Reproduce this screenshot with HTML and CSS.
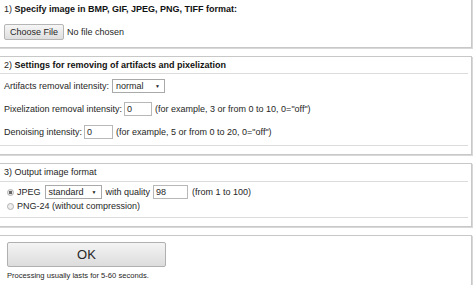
FILE: index.html
```html
<!DOCTYPE html>
<html>
<head>
<meta charset="utf-8">
<link rel="stylesheet" href="styles.css">
</head>
<body>
<div class="page">
  <section class="box box-file">
    <div class="head"><span class="num">1)</span> <b>Specify image in BMP, GIF, JPEG, PNG, TIFF format:</b></div>
    <div class="file-row">
      <button class="btn-file" type="button">Choose File</button>
      <span class="file-name">No file chosen</span>
    </div>
  </section>

  <section class="box box-set">
    <div class="head sep"><span class="num">2)</span> <b>Settings for removing of artifacts and pixelization</b></div>
    <div class="rows sep">
      <div class="row"><span>Artifacts removal intensity:</span><span class="select sel-normal"><span>normal</span><span class="arrow">▼</span></span></div>
      <div class="row"><span>Pixelization removal intensity:</span><span class="field f-pix">0</span><span class="hint">(for example, 3 or from 0 to 10, 0="off")</span></div>
      <div class="row"><span>Denoising intensity:</span><span class="field f-den">0</span><span class="hint">(for example, 5 or from 0 to 20, 0="off")</span></div>
    </div>
  </section>

  <section class="box box-fmt">
    <div class="head sep"><span class="num">3) Output image format</span></div>
    <div class="radios sep">
      <div class="rrow"><span class="radio on"></span><span>JPEG</span><span class="select sel-std"><span>standard</span><span class="arrow">▼</span></span><span>with quality</span><span class="field f-q">98</span><span>(from 1 to 100)</span></div>
      <div class="rrow"><span class="radio"></span><span>PNG-24 (without compression)</span></div>
    </div>
  </section>

  <section class="box box-ok">
    <button class="btn-ok" type="button">OK</button>
    <div class="note">Processing usually lasts for 5-60 seconds.</div>
  </section>
</div>
</body>
</html>
```
FILE: styles.css
```css
html, body { margin: 0; padding: 0; background: #fff; }
body {
  font-family: "Liberation Sans", Arial, sans-serif;
  font-size: 9px;
  color: #262626;
  width: 474px;
  height: 285px;
  overflow: hidden;
}
.page {
  margin: -1px 2px 0 -1px;
  display: flex;
  flex-direction: column;
  gap: 8px;
}
.box {
  border: 1px solid #c8c8c8;
  box-shadow: 1px 1px 0 #d8d8d8;
  background: #fff;
}
.head {
  height: 16px;
  line-height: 16px;
  padding-left: 4px;
  color: #111;
  white-space: nowrap;
}
.head .num { font-weight: normal; color: #262626; }
.sep { border-bottom: 1px solid #dcdcdc; margin-right: 3px; }

/* box 1 */
.box-file .head { height: 18px; line-height: 18px; }
.file-row {
  display: flex;
  align-items: center;
  gap: 3px;
  padding: 6px 0 7px 4px;
}
.btn-file {
  font: 9px "Liberation Sans", Arial, sans-serif;
  color: #262626;
  height: 16px;
  padding: 0 5px;
  border: 1px solid #b5b5b5;
  border-radius: 2px;
  background: linear-gradient(#f6f6f6, #dedede);
}

/* box 2 */
.box-set { padding-bottom: 8px; }
.rows {
  display: flex;
  flex-direction: column;
  gap: 9px;
  padding: 5px 0 6px 4px;
}
.row {
  display: flex;
  align-items: center;
  gap: 2px;
  height: 14px;
  white-space: nowrap;
}
.select {
  display: inline-flex;
  align-items: center;
  justify-content: space-between;
  box-sizing: border-box;
  height: 14px;
  border: 1px solid #a9a9a9;
  padding: 0 4px 0 3px;
  background: #fff;
  margin: 0 1px;
}
.arrow { font-size: 5px; color: #222; }
.sel-normal { width: 53px; }
.sel-std { width: 57px; }
.field {
  display: inline-block;
  box-sizing: border-box;
  height: 14px;
  line-height: 12px;
  border: 1px solid #b8b8b8;
  padding: 0 2px;
  background: #fff;
  margin-right: 1px;
}
.f-pix { width: 28px; }
.f-den { width: 29px; }
.f-q { width: 35px; }

/* box 3 */
.box-fmt { padding-bottom: 8px; }
.box-fmt .head { height: 17px; line-height: 17px; }
.radios {
  display: flex;
  flex-direction: column;
  padding: 3px 0 4px 7px;
}
.rrow {
  display: flex;
  align-items: center;
  gap: 3px;
  height: 14px;
  white-space: nowrap;
}
.radio {
  width: 7px;
  height: 7px;
  box-sizing: border-box;
  border-radius: 50%;
  border: 1px solid #b0b0b0;
  background: #eee;
}
.radio.on {
  background: radial-gradient(circle, #666 0 1.5px, #e8e8e8 2px);
}

/* box 4 */
.box-ok {
  height: 43px;
  padding: 6px 0 0 7px;
}
.btn-ok {
  display: block;
  width: 159px;
  height: 25px;
  font: 13px "Liberation Sans", Arial, sans-serif;
  color: #262626;
  border: 1px solid #b0b0b0;
  border-radius: 2px;
  background: linear-gradient(#f4f4f4, #dcdcdc);
}
.note {
  font-size: 7.6px;
  margin-top: 4px;
  color: #262626;
}
```
